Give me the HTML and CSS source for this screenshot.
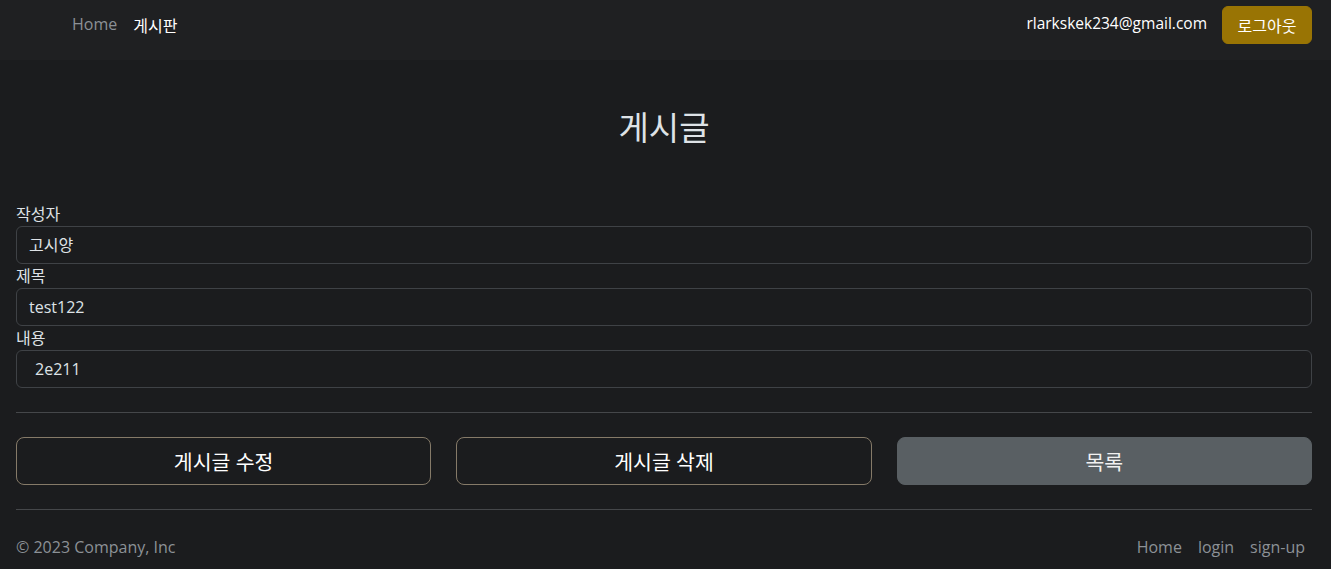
FILE: index.html
```
<!DOCTYPE html>
<html lang="ko">

<head>
    <meta charset="UTF-8">
    <meta name="viewport" content="width=device-width, initial-scale=1.0">
    <title>게시글</title>
    <link rel="stylesheet" href="styles.css">
</head>

<body>
    <header class="topbar">
        <nav class="topbar-links">
            <a href="javascript:;" class="muted">Home</a>
            <a href="javascript:;">게시판</a>
        </nav>
        <div class="topbar-user">
            <span class="email">rlarkskek234@gmail.com</span>
            <button class="btn-logout">로그아웃</button>
        </div>
    </header>

    <main class="page">
        <h2 class="title">게시글</h2>

        <form class="post-form">
            <label class="field-label">작성자</label>
            <div class="field">고시양</div>
            <label class="field-label">제목</label>
            <div class="field">test122</div>
            <label class="field-label">내용</label>
            <div class="field field-indent">2e211</div>
        </form>

        <hr class="rule rule-top">

        <div class="actions">
            <button class="btn btn-outline">게시글 수정</button>
            <button class="btn btn-outline">게시글 삭제</button>
            <button class="btn btn-gray">목록</button>
        </div>

        <hr class="rule rule-bottom">

        <footer class="footer">
            <span>© 2023 Company, Inc</span>
            <nav class="footer-links">
                <a href="javascript:;">Home</a>
                <a href="javascript:;">login</a>
                <a href="javascript:;">sign-up</a>
            </nav>
        </footer>
    </main>
</body>

</html>
```

FILE: styles.css
```
* {
    padding: 0;
    margin: 0;
    box-sizing: border-box;
}

body {
    background: #1b1c1e;
    color: #dee2e6;
    font-family: "Open Sans", "Noto Sans CJK KR", sans-serif;
    font-size: 16px;
}

a {
    text-decoration: none;
    color: inherit;
}

.topbar {
    display: flex;
    justify-content: space-between;
    align-items: center;
    height: 60px;
    padding: 0 19px 0 72px;
    background: #1f2022;
}

.topbar-links {
    display: flex;
    gap: 16px;
    margin-top: -11px;
}

.topbar-links a {
    color: #fff;
}

.topbar-links a.muted {
    color: #8c9196;
}

.topbar-user {
    display: flex;
    align-items: center;
    gap: 15px;
    margin-top: -11px;
}

.email {
    color: #fff;
    font-size: 15.5px;
    margin-top: -4px;
}

.btn-logout {
    width: 90px;
    height: 38px;
    background: #997404;
    color: #fff;
    border: 1px solid #997404;
    border-radius: 6px;
    font-family: inherit;
    font-size: 16px;
}

.page {
    padding: 0 19px 0 16px;
}

.title {
    text-align: center;
    font-weight: 400;
    font-size: 33px;
    color: #dee2e6;
    margin-top: 45px;
    height: 97px;
    line-height: 46px;
}

.post-form {
    display: flex;
    flex-direction: column;
}

.field-label {
    line-height: 24px;
    height: 24px;
    color: #dee2e6;
}

.field {
    height: 38px;
    line-height: 36px;
    padding: 0 12px;
    border: 1px solid #3f4246;
    border-radius: 6px;
    background: #1b1c1e;
    color: #dee2e6;
}

.field-indent {
    padding-left: 18px;
}

.rule {
    border: 0;
    border-top: 1px solid #45474a;
}

.rule-top {
    margin-top: 24px;
}

.actions {
    display: grid;
    grid-template-columns: repeat(3, 1fr);
    gap: 25px;
    margin: 24px 0;
}

.btn {
    height: 48px;
    border-radius: 8px;
    font-family: inherit;
    font-size: 20.5px;
    color: #fff;
}

.btn-outline {
    background: transparent;
    border: 1px solid #857a68;
}

.btn-gray {
    background: #595f63;
    border: 1px solid #595f63;
    color: #f1f1f1;
}

.footer {
    display: flex;
    justify-content: space-between;
    align-items: center;
    height: 72px;
    padding-top: 2px;
    color: #8c9196;
}

.footer-links {
    display: flex;
    gap: 16px;
    margin-right: 7px;
}
```
